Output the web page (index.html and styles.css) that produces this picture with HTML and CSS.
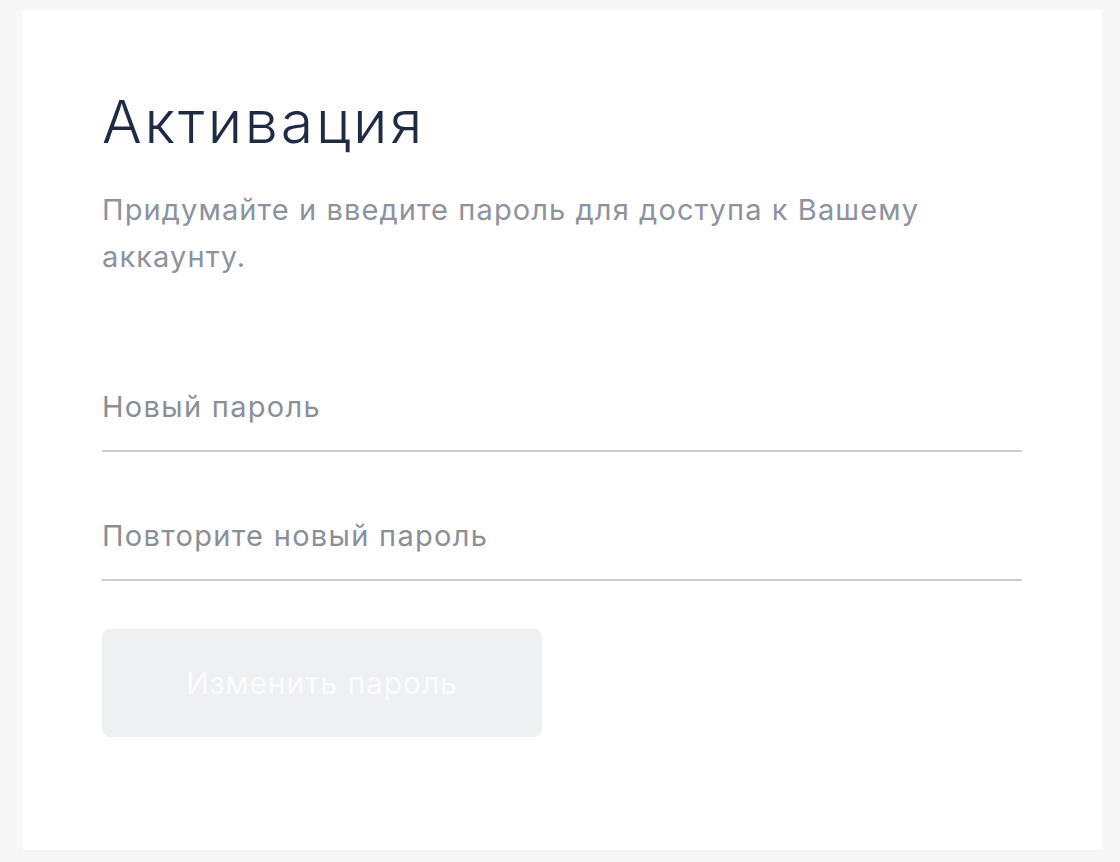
FILE: index.html
```html
<!DOCTYPE html>
<html lang="ru">
<head>
    <meta charset="UTF-8">
    <meta name="viewport" content="width=device-width, initial-scale=1.0">
    <title>Активация</title>
    <link rel="stylesheet" href="styles.css">
</head>
<body>

    <!-- Activation card -->
    <main class="card">
        <h1 class="card-title">Активация</h1>
        <p class="card-text">Придумайте и введите пароль для доступа к Вашему аккаунту.</p>

        <form class="form" id="activationForm">
            <div class="field">
                <input type="password" id="newPassword" placeholder="Новый пароль">
            </div>
            <div class="field">
                <input type="password" id="repeatPassword" placeholder="Повторите новый пароль">
            </div>
            <button type="submit" class="btn" disabled>Изменить пароль</button>
        </form>
    </main>

</body>
</html>
```

FILE: styles.css
```css
body {
    font-family: Inter, "Noto Sans", Arial, sans-serif;
    margin: 0;
    padding: 10px 18px 12px 22px;
    background-color: #f7f7f7;
}
.card {
    box-sizing: border-box;
    width: 1080px;
    height: 840px;
    background-color: #fff;
    padding: 76px 80px 0 80px;
    box-shadow: 0 1px 3px rgba(0, 0, 0, 0.03);
}
.card-title {
    margin: 0;
    font-size: 59px;
    font-weight: 300;
    line-height: 72px;
    color: #1f2b45;
    letter-spacing: 2.8px;
}
.card-text {
    margin: 28px 0 0;
    width: 860px;
    font-size: 29px;
    line-height: 47px;
    color: #8d929f;
    letter-spacing: 1.1px;
}
.form {
    margin-top: 94px;
    width: 920px;
}
.field {
    margin-bottom: 51px;
}
.field input {
    box-sizing: border-box;
    width: 100%;
    height: 78px;
    border: 0;
    border-bottom: 2px solid #cacbd0;
    padding: 0 0 12px;
    font-family: inherit;
    font-size: 29px;
    letter-spacing: 1.3px;
    color: #1f2b45;
    background: transparent;
    outline: none;
}
.field input::placeholder {
    color: #8a8f97;
}
.field:last-of-type {
    margin-bottom: 0;
}
.btn {
    display: block;
    margin-top: 48px;
    width: 440px;
    height: 108px;
    border: 0;
    border-radius: 8px;
    background-color: #eff0f2;
    color: #fbfbfc;
    font-family: inherit;
    font-size: 30px;
    letter-spacing: 0.9px;
}
```
